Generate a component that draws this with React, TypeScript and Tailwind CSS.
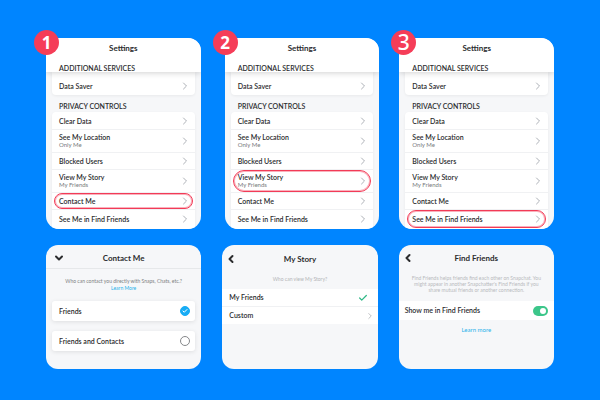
import React from "react";
import { Check, ChevronDown, ChevronLeft, ChevronRight } from "lucide-react";

type Item = { label: string; value?: string };

const privacyItems: Item[] = [
  { label: "Clear Data" },
  { label: "See My Location", value: "Only Me" },
  { label: "Blocked Users" },
  { label: "View My Story", value: "My Friends" },
  { label: "Contact Me" },
  { label: "See Me in Find Friends" },
];

const SettingsRow = ({ label, value, active }: Item & { active?: boolean }) => (
  <button
    type="button"
    className={`relative flex w-full items-center justify-between pl-[7px] pr-1 text-left ${
      value ? "h-[23px]" : "h-[17px] [&:nth-child(6)]:h-[18px]"
    }`}
  >
    <span>
      <span className="block leading-[8px]">{label}</span>
      {value && (
        <span className="block text-[6px] font-normal leading-[8px] text-[#77797c]">{value}</span>
      )}
    </span>
    <ChevronRight className="h-3 w-3 text-[#adb1b7]" strokeWidth={2} />
    {active && (
      <span className="absolute inset-x-0.5 inset-y-0 rounded-full border border-[#f23b57] ring-1 ring-[#f23b57]/40 ring-inset" />
    )}
  </button>
);

const SettingsCard = ({ step, active }: { step: number; active: string }) => (
  <section className="relative min-w-0 flex-1">
    <div className="overflow-hidden rounded-[13px] bg-[#f6f7f9]">
      <header className="relative bg-white shadow-[0_1px_6px_rgba(0,0,0,0.18)]">
        <h2 className="pt-1 text-center text-[8px] font-bold leading-[12px]">Settings</h2>
        <h3 className="px-[13px] pt-2.5 text-[7px] leading-[8px]">ADDITIONAL SERVICES</h3>
      </header>
      <div className="px-1.5">
        <div className="rounded-b-[4px] bg-white pb-px pt-[5px] shadow-[0_1px_3px_rgba(0,0,0,0.06)]">
          <SettingsRow label="Data Saver" />
        </div>
        <h3 className="px-[7px] pb-px pt-1.5 text-[7px] leading-[10px]">PRIVACY CONTROLS</h3>
        <div className="divide-y divide-[#f0f1f3] rounded-t-[4px] bg-white py-px shadow-[0_1px_3px_rgba(0,0,0,0.06)]">
          {privacyItems.map((item) => (
            <SettingsRow key={item.label} {...item} active={item.label === active} />
          ))}
        </div>
      </div>
    </div>
    <span
      className={`absolute -top-2 flex h-[25px] w-[25px] items-center justify-center rounded-full bg-[#f53d58] font-['Noto_Sans',sans-serif] leading-none text-white ${
        step === 3 ? "-left-2 text-[21px] font-medium" : "-left-3 text-[17px] font-bold"
      }`}
    >
      {step}
    </span>
  </section>
);

const ContactOption = ({ label, checked }: { label: string; checked?: boolean }) => (
  <label className="flex h-5 items-center justify-between rounded-[3px] bg-white pl-[7px] pr-[5px] shadow-[0_1px_4px_rgba(0,0,0,0.1)]">
    {label}
    <span className="relative flex h-2.5 w-2.5">
      <input
        type="radio"
        name="contact"
        defaultChecked={checked}
        className="peer h-2.5 w-2.5 appearance-none rounded-full border border-[#85878a] bg-white checked:border-[#17acf5] checked:bg-[#17acf5]"
      />
      <Check
        className="pointer-events-none absolute inset-0 m-auto hidden h-1.5 w-1.5 text-white peer-checked:block"
        strokeWidth={4}
      />
    </span>
  </label>
);

const ContactCard = () => (
  <section className="min-h-[124px] min-w-0 flex-1 rounded-[12px] bg-[#f6f7f9]">
    <header className="relative border-b border-[#e6e8ea] pb-1 pt-[7px]">
      <button type="button" aria-label="Close" className="absolute left-[7px] top-[7px]">
        <ChevronDown className="h-3 w-3" strokeWidth={4} />
      </button>
      <h2 className="text-center text-[8px] font-bold leading-[12px]">Contact Me</h2>
    </header>
    <p className="px-2 pt-[9px] text-center text-[5px] font-normal leading-[7px] text-[#7d7f82]">
      Who can contact you directly with Snaps, Chats, etc.?
      <br />
      <a href="#learn" className="text-[#27b2ea]">
        Learn More
      </a>
    </p>
    <div className="space-y-2.5 px-1.5 pt-[9px]">
      <ContactOption label="Friends" checked />
      <ContactOption label="Friends and Contacts" />
    </div>
  </section>
);

const StoryCard = () => (
  <section className="ml-[21px] min-h-[124px] min-w-0 flex-1 rounded-[12px] bg-[#f6f7f9]">
    <header className="relative pt-2">
      <button type="button" aria-label="Back" className="absolute left-[3px] top-2">
        <ChevronLeft className="h-3 w-3" strokeWidth={4} />
      </button>
      <h2 className="text-center text-[8px] font-bold leading-[12px]">My Story</h2>
    </header>
    <p className="pt-[11px] text-center text-[5px] font-normal leading-[7px] text-[#b3b5b8]">
      Who can view My Story?
    </p>
    <div className="mt-1.5 divide-y divide-[#f0f1f3] bg-white">
      <button type="button" className="flex h-[18px] w-full items-center justify-between pl-[7px] pr-2.5">
        My Friends
        <Check className="h-2.5 w-2.5 text-[#2fb987]" strokeWidth={3} />
      </button>
      <button type="button" className="flex h-[17px] w-full items-center justify-between pl-[7px] pr-[3px]">
        Custom
        <ChevronRight className="h-2.5 w-2.5 text-[#b4b7bb]" strokeWidth={2} />
      </button>
    </div>
  </section>
);

const FindFriendsCard = () => (
  <section className="ml-[21px] min-h-[124px] min-w-0 flex-1 rounded-[12px] bg-[#f6f7f9]">
    <header className="relative pt-[7px]">
      <button type="button" aria-label="Back" className="absolute left-[3px] top-[7px]">
        <ChevronLeft className="h-3 w-3" strokeWidth={4} />
      </button>
      <h2 className="text-center text-[8px] font-bold leading-[12px]">Find Friends</h2>
    </header>
    <p className="pt-[11px] text-center text-[5px] font-normal leading-[6px] text-[#b8babd]">
      Find Friends helps friends find each other on Snapchat. You
      <br />
      might appear in another Snapchatter's Find Friends if you
      <br />
      share mutual friends or another connection.
    </p>
    <label className="mt-2 flex h-[19px] items-center justify-between bg-white px-1.5">
      Show me in Find Friends
      <span className="relative flex">
        <input
          type="checkbox"
          role="switch"
          defaultChecked
          className="peer h-2.5 w-[15px] appearance-none rounded-full bg-[#c9ccd0] checked:bg-[#3cc68a]"
        />
        <span className="pointer-events-none absolute left-0.5 top-0.5 h-1.5 w-1.5 rounded-full bg-white peer-checked:left-[7px]" />
      </span>
    </label>
    <a href="#more" className="mx-auto mt-1.5 block w-fit text-[6px] font-normal leading-[8px] text-[#27b2ea]">
      Learn more
    </a>
  </section>
);

const App = () => {
  return (
    <main className="min-h-screen bg-[#0085ff] px-[46px] pb-[30px] pt-[38px] font-['Lato',sans-serif] text-[7px] font-semibold text-[#2b2c2e]">
      <div className="flex">
        <SettingsCard step={1} active="Contact Me" />
        <div className="w-6" />
        <SettingsCard step={2} active="View My Story" />
        <div className="w-5" />
        <SettingsCard step={3} active="See Me in Find Friends" />
      </div>
      <div className="mt-4 flex">
        <ContactCard />
        <StoryCard />
        <FindFriendsCard />
      </div>
    </main>
  );
};

export default App;
